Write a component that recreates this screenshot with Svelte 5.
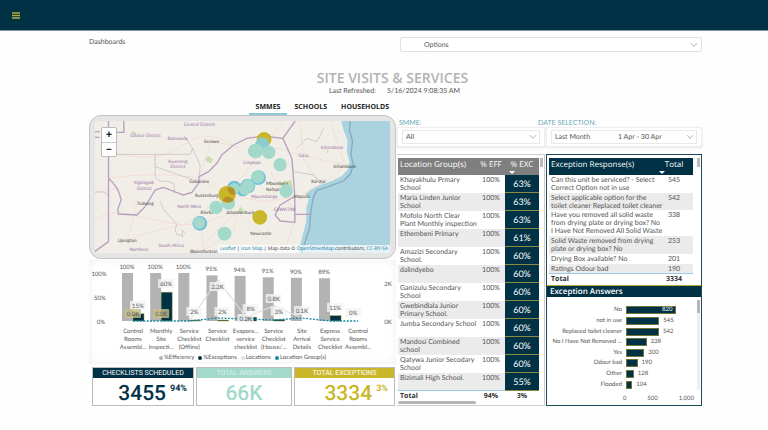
<script>
  const tabs = ['SMMES', 'SCHOOLS', 'HOUSEHOLDS'];
  let active = $state('SMMES');

  const groups = [
    ['Khayakhulu Prmary School', 63],
    ['Maria Linden Junior School', 63],
    ['Mofolo North Clear Plant Monthly inspection', 63],
    ['Ethembeni Primary', 61],
    ['Amazizi Secondary School.', 60],
    ['dalindyebo', 60],
    ['Ganizulu Secondary School', 60],
    ['Gwebindlala Junior Primary School.', 60],
    ['Jumba Secondary School', 60],
    ['Mandosi Combined school', 60],
    ['Qatywa Junior Secodary School', 60],
    ['Bizimali High School.', 55]
  ];

  const responses = [
    [['Can this unit be serviced? - Select', 'Correct Option not in use'], 545],
    [['Select applicable option for the', 'toilet cleaner Replaced toilet cleaner'], 542],
    [['Have you removed all solid waste', 'from drying plate or drying box? No', 'I Have Not Removed All Solid Waste'], 338],
    [['Solid Waste removed from drying', 'plate or drying box? No'], 253],
    [['Drying Box available? No'], 201],
    [['Ratings Odour bad'], 190]
  ];

  const answers = [
    ['No', 820],
    ['not in use', 545],
    ['Replaced toilet cleaner', 542],
    ['No I Have Not Removed ...', 338],
    ['Yes', 300],
    ['Odour bad', 190],
    ['Other', 128],
    ['Flooded', 104]
  ];

  const visits = [
    { name: ['Control', 'Rooms', 'Assembl...'], eff: 100, exc: 15, loc: '0.0K', locY: 54, groupY: 61 },
    { name: ['Monthly', 'Site', 'Inspecti...'], eff: 100, exc: 60, loc: '0.0K', locY: 54, groupY: 61 },
    { name: ['Service', 'Checklist', '(Offline)'], eff: 100, exc: 2, groupY: 61 },
    { name: ['Service', 'Checklist'], eff: 95, exc: 2, loc: '2.2K', locY: 27, groupY: 58 },
    { name: ['Evapora...', 'service', 'checklist'], eff: 94, exc: 8, loc: '0.2K', locY: 59, groupY: 59 },
    { name: ['Service', 'Checklist', '(House/...'], eff: 91, exc: 3, loc: '0.8K', locY: 39, groupY: 60 },
    { name: ['Site', 'Arrival', 'Details'], eff: 90, loc: '0.1K', locY: 51, groupY: 58 },
    { name: ['Express', 'Service', 'Checklist'], eff: 89, exc: 11, groupY: 61 },
    { name: ['Control', 'Rooms', 'Assembl...'], exc: 0, groupY: 61 }
  ];
  const cx = (i) => 44 + i * 28.15;
  const top = (v) => 61 - v * 0.48;
  const groupLine = visits.map((v, i) => `${cx(i)},${v.groupY}`).join(' ');

  const teal = [[517, 108, 22], [556, 112, 20], [590, 149, 20], [523, 186, 19], [494, 212, 19], [484, 222, 18], [608, 228, 20], [452, 220, 16], [435, 264, 20], [398, 277, 20], [347, 324, 18], [423, 356, 21]];
  const blue = [[514, 108, 20], [525, 188, 22], [493, 213, 22], [478, 224, 20], [452, 217, 20], [349, 325, 22]];
  const places = [
    ['Gabarone', 347, 203], ['Rustenburg', 370, 245], ['Tsabong', 185, 271], ['Upington', 131, 381],
    ['Serowe', 384, 85], ['Klerks', 370, 298], ['Johannesburg', 470, 296], ['Bloemfontein', 361, 413],
    ['Inhambane', 784, 160], ['Xai-Xai', 704, 204], ['Maputo', 654, 250], ['Newcastle', 532, 360],
    ['Mbombela', 580, 210], ['Nelspruit', 576, 228]
  ];
  const regions = [
    ['Central District', 348, 33], ['Ghanzi District', 186, 66], ['Botswana', 282, 76], ['Kweneng', 283, 144],
    ['District', 283, 160], ['Kgalagadi', 182, 208], ['District', 182, 224], ['North West', 317, 279],
    ['South Africa', 263, 395], ['Northern', 166, 408], ['Limpopo', 505, 148], ['Gaza', 660, 127],
    ['Inhambane', 746, 103], ['Mpumalanga', 542, 248], ['ESWATINI', 604, 289]
  ];
</script>

{#snippet chevron()}
  <svg class="chevron" viewBox="0 0 8 6" aria-hidden="true"><path d="M1 1.2 4 4.4 7 1.2" /></svg>
{/snippet}

<header>
  <button class="menu" aria-label="Menu">
    <svg viewBox="0 0 8 7" aria-hidden="true"><path d="M0 1h8M0 3.5h8M0 6h8" /></svg>
  </button>
</header>

<main>
  <div class="top">
    <a href="#dashboards">Dashboards</a>
    <div class="pick options">
      <select aria-label="Options"><option>Options</option></select>
      {@render chevron()}
    </div>
  </div>

  <div class="heading">
    <h1>SITE VISITS &amp; SERVICES</h1>
    <p><span>Last Refreshed:</span><time>5/16/2024 9:08:35 AM</time></p>
  </div>

  <div class="report">
    <section class="left">
      <nav>
        {#each tabs as t}
          <button class:active={active === t} onclick={() => (active = t)}>{t}</button>
        {/each}
      </nav>

      <div class="map">
        <svg class="tiles" viewBox="33 18 888 396" preserveAspectRatio="xMidYMid slice" role="img" aria-label="Map of site visits">
          <rect x="33" y="18" width="888" height="396" fill="#f1eee8" />
          <path class="sea" d="M773 18 L780 45 792 75 790 110 798 140 792 165 775 183 745 198 710 210 680 224 666 238 676 250 673 265 668 280 668 320 660 350 650 390 645 414 H921 V18Z" />
          <path class="shore" d="M800 18 L798 45 807 80 802 120 810 150 800 178 780 198 735 215 700 226 690 245 682 290 678 340 665 380 655 414" />
          <path class="park" d="M364 130l12-6 12 8-5 12-12-3zM144 48l10 2 4 8-10-2zM588 205l35-10 5 20-30 4zM728 105l8 4-3 8zM470 275l10 8-5 14-14-3z" />
          <g class="road">
            <path d="M33 310 Q90 285 150 300 T300 330 L431 238 485 175 545 90 600 18" />
            <path d="M75 110 Q220 150 300 90 T470 110M75 190 Q200 170 347 188 L431 238 540 260 654 242" />
            <path d="M130 375 Q250 330 350 325 L462 290 532 350 600 414M350 325 L361 405M462 290 L330 414" />
            <path d="M654 242 L740 190 784 150 760 80 740 18M545 90 L650 120 784 150M384 78 L347 188M384 78 L480 100" />
            <path d="M33 235 L100 220 160 270 131 375M462 290 L450 350 361 405M560 170 L590 220 640 300 600 414M650 18 L660 130 704 200" />
          </g>
          <g class="district">
            <path d="M75 118H320L327 100 310 75 300 60M215 118V180Q220 205 250 198L272 206V235M215 155 330 195M327 100 350 150 347 188M33 232Q60 225 75 242" />
            <path d="M230 258q8 25 22 40t28 30l-5 15q5 25 15 15l8 8-2-20 10 10M632 170l60 10 20 28M640 100l30-30 30 10 20-40" />
          </g>
          <g class="border">
            <path d="M121 18V52H75M75 18V380L33 410M75 190Q105 215 113 255L103 282 105 297 160 300 185 275 215 225 240 217 300 240 325 232 345 205 347 185 375 170 400 145 415 120 450 90 490 70 540 63 598 70 635 18" />
            <path d="M33 50h15M33 67h15M598 70 625 130 628 165 634 245M634 245 620 252 590 270 575 300 590 318 634 322V245M634 298H682" />
          </g>
          <g class="place">
            {#each places as [t, x, y]}<text {x} {y}>{t}</text>{/each}
          </g>
          <g class="region">
            {#each regions as [t, x, y]}<text {x} {y}>{t}</text>{/each}
          </g>
          <circle cx="542" cy="73" r="22" fill="#c9b729" />
          <circle cx="536" cy="88" r="21" fill="#8fcbcd" />
          {#each blue as [x, y, r]}<circle cx={x} cy={y} {r} fill="#6fbfda" />{/each}
          {#each teal as [x, y, r]}<circle cx={x} cy={y} {r} fill="#a3d9cb" />{/each}
          <circle cx="431" cy="238" r="26" fill="#c9b729" />
          <path d="M452 222a20 20 0 0 0-20-4 22 22 0 0 0 22 23 26 26 0 0 0-2-19zM417 256q14-22 34-1-16 14-34 1z" fill="#b78f2c" />
          <circle cx="529" cy="307" r="22" fill="#c9b729" />
        </svg>
        <div class="zoom">
          <button aria-label="Zoom in">+</button>
          <button aria-label="Zoom out">−</button>
        </div>
        <div class="credit">
          <a href="#leaflet">Leaflet</a> | <a href="#icon-map">Icon Map</a> | Map data © <a href="#osm">OpenStreetMap</a> contributors, <a href="#licence">CC-BY-SA</a>
        </div>
      </div>

      <div class="visits">
        <svg viewBox="0 0 307 91" role="img" aria-label="Efficiency and exceptions by checklist">
          <g class="axis">
            <text x="10" y="16">100%</text>
            <text x="11" y="40">50%</text>
            <text x="12" y="64">0%</text>
            <text x="299" y="26">2K</text>
            <text x="299" y="64">0K</text>
          </g>
          {#each visits as v, i}
            {#if v.eff}
              <rect x={cx(i) - 11} y={top(v.eff)} width="11" height={v.eff * 0.48} fill="#b3b3b3" />
              <text x={cx(i) - 6} y={top(v.eff) - 4}>{v.eff}%</text>
            {/if}
            {#if v.exc}
              <rect class="exc" x={cx(i)} y={top(v.exc)} width="11" height={v.exc * 0.48} />
            {/if}
          {/each}
          <polyline class="locations" points="101,60 129,20 157,57 185,46 213,58" />
          <polyline class="groups" points={groupLine} />
          {#each visits as v, i}
            {#if v.exc !== undefined}
              <rect class="pill" x={cx(i) + (v.eff ? -3 : -13)} y={top(v.exc) - 13} width="16" height="9" />
              <text x={cx(i) + (v.eff ? 5 : -5)} y={top(v.exc) - 6}>{v.exc}%</text>
            {/if}
            {#if v.loc}
              <rect class="pill" class:olive={i < 2} x={cx(i) - 8} y={v.locY - 5} width="16" height="9" rx="1" />
              <text x={cx(i)} y={v.locY + 2}>{v.loc}</text>
            {/if}
            {#each v.name as line, n}
              <text x={cx(i)} y={73 + n * 8}>{line}</text>
            {/each}
          {/each}
        </svg>
        <ul>
          <li><i style:background="#b3b3b3"></i>%Efficiency</li>
          <li><i style:background="#003145"></i>%Exceptions</li>
          <li><i style:background="#e0e0e0"></i>Locations</li>
          <li><i style:background="#1688a8"></i>Location Group(s)</li>
        </ul>
      </div>

      <div class="cards">
        <article class="navy"><h2>CHECKLISTS SCHEDULED</h2><p><b>3455</b><sup>94%</sup></p></article>
        <article class="mint"><h2>TOTAL ANSWERS</h2><p><b>66K</b></p></article>
        <article class="gold"><h2>TOTAL EXCEPTIONS</h2><p><b>3334</b><sup>3%</sup></p></article>
      </div>
    </section>

    <section class="middle">
      <label for="smme">SMME:</label>
      <div class="panel">
        <div class="pick">
          <select id="smme"><option>All</option></select>
          {@render chevron()}
        </div>
      </div>
      <div class="groupbox">
        <table>
          <thead>
            <tr><th>Location Group(s)</th><th>% EFF</th><th class="sorted">% EXC</th></tr>
          </thead>
          <tbody>
            {#each groups as [name, exc]}
              <tr><td>{name}</td><td>100%</td><td>{exc}%</td></tr>
            {/each}
          </tbody>
          <tfoot>
            <tr><td>Total</td><td>94%</td><td>3%</td></tr>
          </tfoot>
        </table>
        <i class="vbar"></i>
        <i class="hbar"></i>
      </div>
    </section>

    <section class="right">
      <label for="dates">DATE SELECTION:</label>
      <div class="panel">
        <div class="pick">
          <select id="dates"><option>Last Month</option></select>
          <span>1 Apr - 30 Apr</span>
          {@render chevron()}
        </div>
      </div>
      <div class="exceptions">
        <div class="responses">
          <table>
            <thead>
              <tr><th>Exception Response(s)</th><th class="sorted">Total</th></tr>
            </thead>
            <tbody>
              {#each responses as [lines, total]}
                <tr><td>{#each lines as line}<span>{line}</span>{/each}</td><td>{total}</td></tr>
              {/each}
            </tbody>
            <tfoot>
              <tr><td>Total</td><td>3334</td></tr>
            </tfoot>
          </table>
          <i class="vbar"></i>
        </div>
        <h2>Exception Answers</h2>
        <div class="answers">
          <div class="bars">
            {#each answers as [name, n]}
              <div class="bar">
                <span>{name}</span>
                <div class="track">
                  <i style:width="{n / 10}%"></i>
                  <em class:inside={n > 800}>{n}</em>
                </div>
              </div>
            {/each}
          </div>
          <div class="scale"><span>0</span><span>500</span><span>1,000</span></div>
          <i class="vbar"></i>
        </div>
      </div>
    </section>
  </div>
</main>

<style>
  :global(body) {
    background: #fefefe;
    color: #555;
    font: 7px/8px Lato, 'Open Sans', sans-serif;
    text-rendering: geometricPrecision;
  }
  h1, h2, p, ul { margin: 0; padding: 0; font-size: inherit; font-weight: inherit; }
  button, select { margin: 0; padding: 0; border: 0; background: none; color: inherit; font: inherit; text-rendering: inherit; }
  a { color: inherit; text-decoration: none; }
  table { width: 100%; border-collapse: collapse; table-layout: fixed; }
  th, td { padding: 0; vertical-align: top; font-weight: 400; text-align: center; }
  th:first-child, td:first-child { text-align: left; padding-left: 2px; }
  h1, nav, th, tfoot, .exceptions h2 { font-family: 'Open Sans', sans-serif; }

  header { height: 30px; background: #003145; border-bottom: 1px solid #7c98a2; display: flex; align-items: center; padding-left: 12px; }
  .menu, .menu svg { display: block; width: 8px; height: 7px; }
  .menu path { stroke: #b0ad3a; stroke-width: 1.3; }

  main { padding: 6px 66px 0 89px; }
  .top { display: grid; grid-template-columns: 311fr 302fr; }
  .top a { padding-top: 1px; }
  .pick { position: relative; display: grid; align-items: center; background: #fff; border: 1px solid #e9e9e9; box-sizing: border-box; }
  .pick select { grid-area: 1 / 1; appearance: none; width: 100%; height: 100%; padding-left: 3px; color: #555; }
  .pick span { grid-area: 1 / 1; padding-left: 66px; pointer-events: none; color: #555; }
  .chevron { grid-area: 1 / 1; justify-self: end; width: 8px; height: 6px; margin-right: 2px; pointer-events: none; }
  .chevron path { fill: none; stroke: #999; stroke-width: 0.8; }
  .options { height: 15px; border-color: #dfe0ea; border-radius: 2px; }
  .options select { padding-left: 23px; }
  .options .chevron { margin-right: 3px; }

  .heading { text-align: center; padding: 19px 6px 0 0; }
  h1 { font-size: 14px; line-height: 16px; font-weight: 600; color: #b3b3b3; }
  .heading p { display: flex; justify-content: center; gap: 11px; padding-left: 4px; color: #555; }

  .report { display: grid; grid-template-columns: 307fr 148fr 156fr; column-gap: 1px; padding-top: 7px; }
  .left { display: flex; flex-direction: column; min-width: 0; }
  nav { display: flex; justify-content: flex-end; }
  nav button { padding: 1px 7px 0; line-height: 10px; font-weight: 700; color: #222; border-bottom: 2px solid transparent; }
  nav button.active { border-color: #8cc7d6; }

  .map { position: relative; border: 1px solid #c4c4c4; border-radius: 12px; padding: 5px; background: #e5e5e5; }
  .tiles { display: block; width: 100%; height: 132px; }
  .sea { fill: #aad3df; }
  .shore { fill: none; stroke: #86a9c4; stroke-width: 4; }
  .park { fill: #c8ddb0; }
  .road { fill: none; stroke: #f3d7cd; stroke-width: 2; }
  .district { fill: none; stroke: #c3b5c8; stroke-width: 2; }
  .border { fill: none; stroke: #b79fbd; stroke-width: 4; }
  .tiles text { font-size: 14px; text-anchor: middle; }
  .place { fill: #444; }
  .region { fill: #9870a6; }
  .zoom { position: absolute; left: 11px; top: 11px; width: 14px; border: 1px solid #bbb; border-radius: 2px; background: #fff; }
  .zoom button { display: block; width: 100%; height: 14px; font-size: 11px; font-weight: 700; color: #000; }
  .zoom button + button { border-top: 1px solid #ccc; }
  .credit { position: absolute; right: 5px; bottom: 5px; padding: 0 2px; font: 5px/8px 'Open Sans', sans-serif; color: #333; background: #ffffffb3; white-space: nowrap; }
  .credit a { color: #0078a8; }

  .visits { margin-top: 1px; padding-bottom: 2px; background: #fff; box-shadow: inset 0 0 8px #eee; }
  .visits svg { display: block; width: 100%; }
  .visits text { font-size: 6px; fill: #555; text-anchor: middle; }
  .exc { fill: #003145; stroke: #9d9642; stroke-width: 0.5; }
  .locations { fill: none; stroke: #ddd; stroke-width: 1.2; }
  .groups { fill: none; stroke: #1688a8; stroke-width: 1.3; stroke-dasharray: 2 1.4; }
  .pill { fill: #f4f4f4; fill-opacity: 0.8; }
  .olive { fill: #c9bf86; }
  .visits ul { display: flex; justify-content: center; gap: 4px; list-style: none; padding-top: 3px; font-size: 6px; }
  .visits li { display: flex; align-items: center; gap: 1px; }
  .visits i { width: 4px; height: 4px; border-radius: 50%; }

  .cards { display: grid; grid-template-columns: 102fr 96fr 101fr; gap: 2px; padding: 3px 1px 0 3px; font-family: Roboto, sans-serif; }
  article { border: 1px solid #bbb; background: #fff; text-align: center; height: 37px; }
  article h2 { line-height: 10px; background: var(--tone); color: var(--ink); white-space: nowrap; }
  article p { display: flex; justify-content: center; gap: 4px; color: var(--tone); padding-top: 5px; }
  article p:has(sup) { justify-content: flex-end; padding-right: 6px; }
  article b { font-size: 21px; line-height: 22px; font-weight: 500; }
  article sup { font-size: 9px; line-height: 12px; font-weight: 700; }
  .navy { --tone: #003145; --ink: #fff; }
  .mint { --tone: #a3d9cb; --ink: #d9f2eb; }
  .gold { --tone: #c9b729; --ink: #fff; }

  .middle, .right { padding-top: 17px; min-width: 0; }
  label { display: block; color: #69a9bb; padding-left: 2px; }
  .right label { margin-left: -10px; }
  .panel { padding: 2px 4px; background: #fff; border: 1px solid #eee; box-shadow: 0 1px 2px #e5e5e5; }
  .panel .pick { height: 14px; }

  .groupbox { position: relative; box-sizing: border-box; height: 252px; margin-top: 7px; border: 1px solid #ccc; border-left: 0; padding: 3px 5px 0 1px; background: #fff; }
  .groupbox table { height: 242px; }
  .groupbox th:nth-child(2) { width: 28px; }
  .groupbox th:nth-child(3) { width: 34px; }
  .groupbox tbody td { height: 16px; }
  tbody td { padding-top: 1px; }
  thead th { font-size: 8px; line-height: 13px; height: 17px; color: #fff; }
  .groupbox thead { background: #7f7f7f; }
  .sorted { position: relative; }
  .sorted::after { content: ''; position: absolute; left: 4px; bottom: 1px; border: 3px solid transparent; border-top-color: #fff; border-bottom: 0; }
  tbody tr:nth-child(even) { background: #ebebeb; }
  .groupbox tbody td:nth-child(3) { background: #003145; color: #fff; font-size: 9px; vertical-align: middle; border-bottom: 1px solid #8a8b3e; }
  tfoot { border-top: 1px solid #9ccbe8; }
  tfoot td { height: 11px; font-weight: 700; color: #333; vertical-align: middle; }
  .vbar { position: absolute; right: 1px; top: 3px; width: 3px; height: 9px; background: #bbb; }
  .hbar { position: absolute; left: 1px; bottom: 1px; width: 78px; height: 3px; border-radius: 2px; background: #b5b5b5; }

  .exceptions { box-sizing: border-box; height: 252px; margin-top: 7px; border: 1px solid #1d4a5b; background: #fff; display: flex; flex-direction: column; }
  .responses { position: relative; box-sizing: border-box; padding: 3px 8px 0 2px; height: 130px; }
  .responses table { height: 127px; }
  .responses thead { background: #003145; }
  .responses th:nth-child(2) { width: 38px; }
  .responses td span { display: block; white-space: nowrap; }
  .exceptions h2 { border-top: 1px solid #b9ad3d; background: #003145; color: #fff; font-size: 8px; font-weight: 600; line-height: 11px; padding-left: 3px; }
  .answers { position: relative; flex: 1; padding: 8px 14px 0 0; }
  .bars { height: 85px; display: flex; flex-direction: column; justify-content: space-around; }
  .bar { display: flex; align-items: center; gap: 4px; font-size: 6px; }
  .bar span { flex: 1; text-align: right; white-space: nowrap; }
  .track { width: 61px; height: 8px; display: flex; align-items: center; gap: 4px; }
  .track i { flex: none; box-sizing: border-box; height: 8px; background: #003145; border: 1px solid #6f7536; }
  .track em { font-style: normal; }
  .track em.inside { margin-left: -18px; color: #fff; }
  .scale { display: flex; justify-content: space-between; width: 71px; margin: 5px -7px 0 auto; font-size: 6px; }
  .answers .vbar { height: 90px; background: linear-gradient(#b5b5b5 13px, #eee 13px); }
</style>
